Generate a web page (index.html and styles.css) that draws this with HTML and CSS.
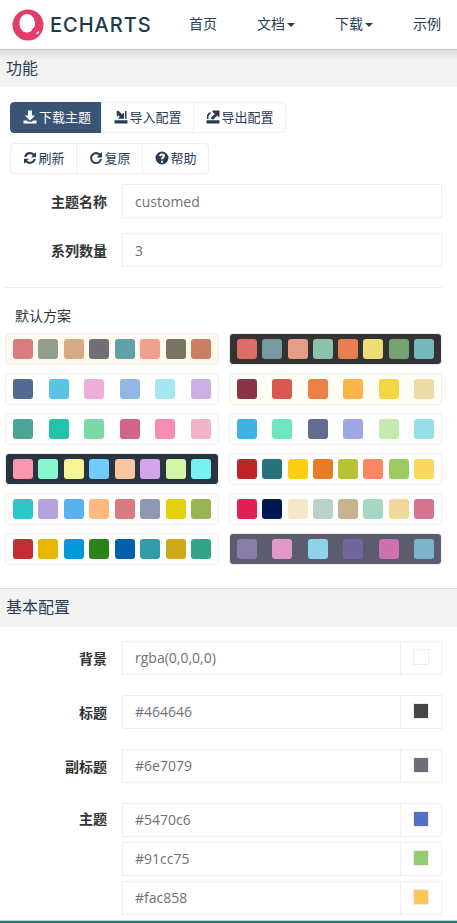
FILE: index.html
```html
<!DOCTYPE html>
<html lang="zh-CN">
<head>
    <meta charset="UTF-8">
    <meta name="viewport" content="width=device-width, initial-scale=1.0">
    <title>ECharts 主题编辑器</title>
    <link rel="stylesheet" href="styles.css">
</head>
<body>
    <nav class="navbar">
        <a class="logo">
            <svg class="logo-mark" width="32" height="32" viewBox="0 0 32 32">
                <path fill="#e43c68" fill-rule="evenodd" d="M16 .5a15.500 15.500 0 1 1 0 31 15.500 15.500 0 0 1 0-31zM15 5c-4.400 0-7.500 4-7.500 9.300s3.100 9.200 7.500 9.200 8-4 8-9.200S19.400 5 15 5z"/>
                <path fill="#e43c68" d="M19.500 21l3-3 3 3-3 3z"/>
                <path stroke="#fff" stroke-width="1.200" fill="none" d="M24.500 25l2.500-2.500"/>
            </svg>
            <span class="logo-text">ECHARTS</span>
        </a>
        <ul class="nav-links">
            <li>首页</li>
            <li>文档<span class="caret"></span></li>
            <li>下载<span class="caret"></span></li>
            <li>示例</li>
        </ul>
    </nav>

    <h4 class="panel-title panel-first">功能</h4>
    <section class="panel-body">
        <div class="btn-group">
            <button class="btn active">
                <svg class="icon" viewBox="0 0 14 14"><path d="M5 .5h4v5h3.200L7 10.500 1.800 5.500H5zM.5 10.500h3.200l1.500 1.300h3.600l1.500-1.300h3.200v3H.5z"/></svg>下载主题
            </button>
            <button class="btn">
                <svg class="icon" viewBox="0 0 14 14"><path d="M2.500 1.500l1.700-1 3.800 3.800L10 2.500v6.300H3.700l2-2L4.500 5.500 3 7zM11 1h1.500v7.800H11zM.5 10.200h13v3.300H.5z"/></svg>导入配置
            </button>
            <button class="btn">
                <svg class="icon" viewBox="0 0 14 14"><path d="M6.500.5h7v7l-2.200-2-4.300 4.300-2.500-1.800L8.800 4 6.500 2zM3 2.500h2.500L2.500 6v3H1V5zM.5 10.200h13v3.300H.5z"/></svg>导出配置
            </button>
        </div>
        <div class="btn-group">
            <button class="btn">
                <svg class="icon" viewBox="0 0 14 14"><path d="M7 1c1.700 0 3.200.7 4.200 1.800L13 1.200v5H8l1.900-1.900A4 4 0 0 0 3.300 6H1.200A6 6 0 0 1 7 1zM1 7.800h5L4.100 9.700A4 4 0 0 0 10.700 8h2.100A6 6 0 0 1 2.800 11.200L1 12.800z"/></svg>刷新
            </button>
            <button class="btn">
                <svg class="icon" viewBox="0 0 14 14"><path d="M7 1c1.600 0 3.100.7 4.200 1.800L13 1v5.500H7.500l2.300-2.300A4 4 0 1 0 11 8h2A6 6 0 1 1 7 1z"/></svg>复原
            </button>
            <button class="btn">
                <svg class="icon" viewBox="0 0 14 14"><path fill-rule="evenodd" d="M7 .5a6.500 6.500 0 1 1 0 13 6.500 6.500 0 0 1 0-13zM6 9.700v2h2v-2zM7 2.500C5.400 2.500 4.200 3.500 4 5l2 .3c.1-.6.400-1 1-1 .5 0 .8.300.8.700 0 .9-1.900 1.200-1.900 3.200H8c0-1.200 2-1.500 2-3.400 0-1.400-1.200-2.300-3-2.300z"/></svg>帮助
            </button>
        </div>

        <div class="form-row">
            <label class="form-label">主题名称</label>
            <input class="form-input" type="text" value="customed">
        </div>
        <div class="form-row">
            <label class="form-label">系列数量</label>
            <input class="form-input" type="text" value="3">
        </div>

        <hr class="divider">
        <p class="scheme-title">默认方案</p>

        <div class="theme-grid">
            <div class="theme-item" style="background:#fef8ef">
                <i style="background:#d87c7c"></i><i style="background:#919e8b"></i><i style="background:#d7ab82"></i><i style="background:#6e7074"></i><i style="background:#61a0a8"></i><i style="background:#efa18d"></i><i style="background:#787464"></i><i style="background:#cc7e63"></i>
            </div>
            <div class="theme-item" style="background:#333333">
                <i style="background:#dd6b66"></i><i style="background:#759aa0"></i><i style="background:#e69d87"></i><i style="background:#8dc1a9"></i><i style="background:#ea7e53"></i><i style="background:#eedd78"></i><i style="background:#73a373"></i><i style="background:#73b9bc"></i>
            </div>
            <div class="theme-item">
                <i style="background:#516b91"></i><i style="background:#59c4e6"></i><i style="background:#edafda"></i><i style="background:#93b7e3"></i><i style="background:#a5e7f0"></i><i style="background:#cbb0e3"></i>
            </div>
            <div class="theme-item" style="background:#fdfcf5">
                <i style="background:#893448"></i><i style="background:#d95850"></i><i style="background:#eb8146"></i><i style="background:#ffb248"></i><i style="background:#f2d643"></i><i style="background:#ebdba4"></i>
            </div>
            <div class="theme-item">
                <i style="background:#4ea397"></i><i style="background:#22c3aa"></i><i style="background:#7bd9a5"></i><i style="background:#d0648a"></i><i style="background:#f58db2"></i><i style="background:#f2b3c9"></i>
            </div>
            <div class="theme-item">
                <i style="background:#3fb1e3"></i><i style="background:#6be6c1"></i><i style="background:#626c91"></i><i style="background:#a0a7e6"></i><i style="background:#c4ebad"></i><i style="background:#96dee8"></i>
            </div>
            <div class="theme-item" style="background:#293441">
                <i style="background:#fc97af"></i><i style="background:#87f7cf"></i><i style="background:#f7f494"></i><i style="background:#72ccff"></i><i style="background:#f7c5a0"></i><i style="background:#d4a4eb"></i><i style="background:#d2f5a6"></i><i style="background:#76f2f2"></i>
            </div>
            <div class="theme-item">
                <i style="background:#c1232b"></i><i style="background:#27727b"></i><i style="background:#fcce10"></i><i style="background:#e87c25"></i><i style="background:#b5c334"></i><i style="background:#fe8463"></i><i style="background:#9bca63"></i><i style="background:#fad860"></i>
            </div>
            <div class="theme-item">
                <i style="background:#2ec7c9"></i><i style="background:#b6a2de"></i><i style="background:#5ab1ef"></i><i style="background:#ffb980"></i><i style="background:#d87a80"></i><i style="background:#8d98b3"></i><i style="background:#e5cf0d"></i><i style="background:#97b552"></i>
            </div>
            <div class="theme-item">
                <i style="background:#e01f54"></i><i style="background:#001852"></i><i style="background:#f5e8c8"></i><i style="background:#b8d2c7"></i><i style="background:#c6b38e"></i><i style="background:#a4d8c2"></i><i style="background:#f3d999"></i><i style="background:#d3758f"></i>
            </div>
            <div class="theme-item">
                <i style="background:#c12e34"></i><i style="background:#e6b600"></i><i style="background:#0098d9"></i><i style="background:#2b821d"></i><i style="background:#005eaa"></i><i style="background:#339ca8"></i><i style="background:#cda819"></i><i style="background:#32a487"></i>
            </div>
            <div class="theme-item" style="background:#5b5c6e">
                <i style="background:#8a7ca8"></i><i style="background:#e098c7"></i><i style="background:#8fd3e8"></i><i style="background:#71669e"></i><i style="background:#cc70af"></i><i style="background:#7cb4cc"></i>
            </div>
        </div>
    </section>

    <h4 class="panel-title panel-second">基本配置</h4>
    <section class="panel-body panel-config">
        <div class="form-row">
            <label class="form-label">背景</label>
            <div class="color-input"><span>rgba(0,0,0,0)</span><b><i style="background:#ffffff"></i></b></div>
        </div>
        <div class="form-row">
            <label class="form-label">标题</label>
            <div class="color-input"><span>#464646</span><b><i style="background:#464646"></i></b></div>
        </div>
        <div class="form-row">
            <label class="form-label">副标题</label>
            <div class="color-input"><span>#6e7079</span><b><i style="background:#6e7079"></i></b></div>
        </div>
        <div class="form-row form-row-top">
            <label class="form-label">主题</label>
            <div class="color-list">
                <div class="color-input"><span>#5470c6</span><b><i style="background:#5470c6"></i></b></div>
                <div class="color-input"><span>#91cc75</span><b><i style="background:#91cc75"></i></b></div>
                <div class="color-input"><span>#fac858</span><b><i style="background:#fac858"></i></b></div>
            </div>
        </div>
    </section>
    <div class="page-end"></div>
</body>
</html>
```

FILE: styles.css
```css
* {
    box-sizing: border-box;
}
html, body {
    height: 923px;
    overflow: hidden;
}
body {
    margin: 0;
    display: flex;
    flex-direction: column;
    background-color: #fff;
    color: #293c55;
    font-family: "Open Sans", "Noto Sans CJK SC", sans-serif;
    font-size: 14px;
}
.navbar {
    height: 50px;
    flex: none;
    display: flex;
    align-items: center;
    border-bottom: 1px solid #ccc;
}
.logo {
    display: flex;
    align-items: center;
    margin-left: 12px;
    width: 177px;
}
.logo-mark {
    flex: none;
}
.logo-text {
    margin-left: 6px;
    font-family: "Inter", sans-serif;
    font-size: 20px;
    font-weight: 500;
    letter-spacing: 1px;
    color: #1b3a4b;
}
.nav-links {
    display: flex;
    gap: 40px;
    margin: 0;
    padding: 0 0 3px;
    list-style: none;
    white-space: nowrap;
}
.caret {
    display: inline-block;
    margin-left: 2px;
    vertical-align: middle;
    border-top: 4px solid #293c55;
    border-left: 4px solid transparent;
    border-right: 4px solid transparent;
}
.panel-title {
    flex: none;
    margin: 0;
    padding-left: 6px;
    background-color: #f3f3f3;
    font-size: 16px;
    font-weight: 400;
    line-height: 36px;
}
.panel-first {
    height: 37px;
    background-image: linear-gradient(#dcdcdc, #f3f3f3 10px);
}
.panel-second {
    height: 39px;
    border-top: 1px solid #ddd;
}
.panel-body {
    padding: 15px 15px 0 5px;
}
.panel-config {
    flex: 1;
    min-height: 0;
    padding-top: 14px;
}
.btn-group {
    display: flex;
    width: max-content;
    margin: 0 0 10px 5px;
}
.btn {
    display: flex;
    align-items: center;
    height: 31px;
    padding: 0 11.5px 2px;
    margin-left: -1px;
    border: 1px solid #eee;
    background-color: #fff;
    color: #293c55;
    font-family: inherit;
    font-size: 13px;
}
.btn:first-child {
    margin-left: 0;
    border-radius: 4px 0 0 4px;
}
.btn:last-child {
    border-radius: 0 4px 4px 0;
}
.btn-group:first-child .btn:last-child {
    padding-right: 11px;
}
.btn.active {
    padding: 0 10px 2px 12px;
    border-color: #3a5475;
    background-color: #3a5475;
    color: #fff;
}
.icon {
    width: 14px;
    height: 14px;
    margin-right: 2px;
    fill: currentColor;
}
.form-row {
    display: flex;
    align-items: center;
    gap: 15px;
    margin-bottom: 15px;
}
.panel-config .form-row {
    margin-bottom: 20px;
}
.panel-config .form-row-top {
    margin-bottom: 0;
    align-items: flex-start;
}
.form-label {
    flex: none;
    width: 102px;
    text-align: right;
    font-weight: 700;
    color: #333;
}
.form-row-top .form-label {
    line-height: 32px;
}
.form-input {
    width: 320px;
    height: 34px;
    padding: 0 12px;
    border: 1px solid #eee;
    outline: none;
    color: #6e7079;
    font-family: inherit;
    font-size: 14px;
}
.divider {
    height: 1px;
    margin: 20px 0 18px;
    border: none;
    background-color: #eee;
}
.scheme-title {
    margin: 0 0 7px 10px;
    line-height: 20px;
    color: #333;
}
.theme-grid {
    display: grid;
    grid-template-columns: 214px 213px;
    gap: 8px 10px;
    margin-bottom: 23px;
}
.theme-item {
    display: flex;
    justify-content: space-between;
    height: 32px;
    padding: 5px 7px;
    border: 1px solid #eee;
    border-radius: 4px;
}
.theme-item i {
    width: 20px;
    height: 20px;
    border-radius: 3px;
}
.color-input {
    display: flex;
    width: 320px;
    height: 34px;
    border: 1px solid #eee;
    color: #6e7079;
}
.color-input span {
    flex: 1;
    padding-left: 12px;
    line-height: 32px;
}
.color-input b {
    flex: none;
    width: 41px;
    display: flex;
    align-items: center;
    justify-content: center;
    border-left: 1px solid #eee;
}
.color-input i {
    display: block;
    width: 16px;
    height: 16px;
    margin-top: -2px;
    border: 1px solid #eee;
}
.color-list {
    display: flex;
    flex-direction: column;
    gap: 5px;
}
.page-end {
    flex: none;
    height: 3px;
    border-top: 1px solid #ccc;
    background-color: #2a7a7a;
}
```
